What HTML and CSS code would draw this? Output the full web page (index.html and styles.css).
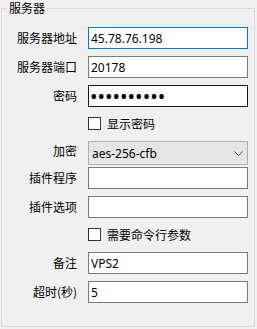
FILE: index.html
```html
<!DOCTYPE html>
<html lang="zh-CN">
<head>
    <meta charset="UTF-8">
    <title>服务器</title>
    <link rel="stylesheet" href="styles.css">
</head>
<body>

    <fieldset class="group">
        <legend>服务器</legend>

        <div class="row">
            <label class="label">服务器地址</label>
            <input type="text" class="field focused" value="45.78.76.198">
        </div>
        <div class="row">
            <label class="label">服务器端口</label>
            <input type="text" class="field" value="20178">
        </div>
        <div class="row">
            <label class="label">密码</label>
            <input type="password" class="field password" value="abcdefghij">
        </div>
        <div class="row row-check">
            <label class="check"><input type="checkbox">显示密码</label>
        </div>
        <div class="row row-combo">
            <label class="label label-combo">加密</label>
            <div class="combo">
                <span>aes-256-cfb</span>
                <svg width="9" height="5" viewBox="0 0 9 5"><path d="M0.5 0.5 L4.5 4.5 L8.5 0.5" fill="none" stroke="#5a5a5a" stroke-width="1"/></svg>
            </div>
        </div>
        <div class="row row-tight">
            <label class="label">插件程序</label>
            <input type="text" class="field" value="">
        </div>
        <div class="row">
            <label class="label">插件选项</label>
            <input type="text" class="field" value="">
        </div>
        <div class="row row-check">
            <label class="check"><input type="checkbox">需要命令行参数</label>
        </div>
        <div class="row row-after-check">
            <label class="label">备注</label>
            <input type="text" class="field" value="VPS2">
        </div>
        <div class="row">
            <label class="label">超时(秒)</label>
            <input type="text" class="field" value="5">
        </div>
    </fieldset>

</body>
</html>
```

FILE: styles.css
```css
body {
    margin: 0;
    background-color: #f0f0f0;
    font-family: "Noto Sans CJK SC", sans-serif;
    font-size: 12px;
    color: #000;
}

.group {
    margin: 0 2px 0 1px;
    padding: 11px 0 23px 0;
    border: 1px solid #dcdcdc;
    min-width: 0;
}

.group legend {
    margin-left: 5px;
    padding: 0 2px;
    line-height: 16px;
}

.row {
    display: flex;
    align-items: center;
    height: 22px;
    margin-top: 7px;
}

.row:first-of-type {
    margin-top: 0;
}

.row-check {
    height: 13px;
    margin-top: 10px;
    padding-left: 86px;
}

.row-combo {
    height: 24px;
    margin-top: 11px;
}

.row-tight {
    margin-top: 2px;
}

.row-after-check {
    margin-top: 11px;
}

.label {
    width: 75px;
    margin-right: 11px;
    text-align: right;
    line-height: 16px;
}

.label-combo {
    margin-top: -4px;
}

.field {
    width: 160px;
    height: 22px;
    box-sizing: border-box;
    margin: 0;
    padding: 0 2px;
    border: 1px solid #7a7a7a;
    background: #fff;
    font-family: "Noto Sans", sans-serif;
    font-size: 12px;
    color: #000;
    outline: none;
}

.focused {
    border-color: #0078d7;
}

.password {
    border-color: #171717;
    font-size: 20px;
    padding-left: 1px;
}

.check {
    display: flex;
    align-items: center;
    line-height: 16px;
}

.check input {
    appearance: none;
    width: 13px;
    height: 13px;
    margin: 0 6px 0 0;
    border: 1px solid #333;
    background: #fff;
}

.combo {
    width: 160px;
    height: 24px;
    box-sizing: border-box;
    display: flex;
    align-items: center;
    justify-content: space-between;
    padding: 0 4px 0 3px;
    border: 1px solid #adadad;
    background: #e5e5e5;
    font-family: "Noto Sans", sans-serif;
    font-size: 12px;
}
```
